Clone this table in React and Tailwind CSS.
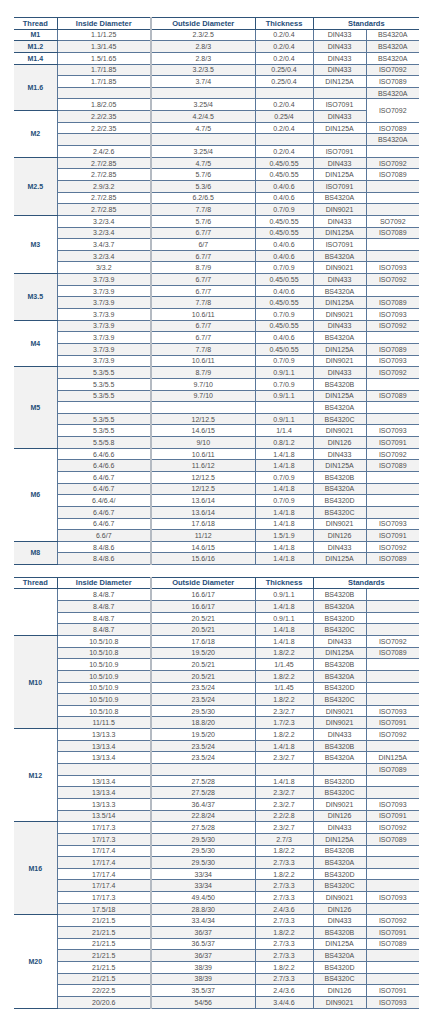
import React from 'react';

// rows: [inside, outside, thickness, std1, std2]; std2 may be { t, span } or null (covered by span above)
const table1 = [
  { thread: 'M1', rows: [['1.1/1.25', '2.3/2.5', '0.2/0.4', 'DIN433', 'BS4320A']] },
  { thread: 'M1.2', rows: [['1.3/1.45', '2.8/3', '0.2/0.4', 'DIN433', 'BS4320A']] },
  { thread: 'M1.4', rows: [['1.5/1.65', '2.8/3', '0.2/0.4', 'DIN433', 'BS4320A']] },
  {
    thread: 'M1.6',
    rows: [
      ['1.7/1.85', '3.2/3.5', '0.25/0.4', 'DIN433', 'ISO7092'],
      ['1.7/1.85', '3.7/4', '0.25/0.4', 'DIN125A', 'ISO7089'],
      ['', '', '', '', 'BS4320A'],
      ['1.8/2.05', '3.25/4', '0.2/0.4', 'ISO7091', { t: 'ISO7092', span: 2 }],
    ],
  },
  {
    thread: 'M2',
    rows: [
      ['2.2/2.35', '4.2/4.5', '0.25/4', 'DIN433', null],
      ['2.2/2.35', '4.7/5', '0.2/0.4', 'DIN125A', 'ISO7089'],
      ['', '', '', '', 'BS4320A'],
      ['2.4/2.6', '3.25/4', '0.2/0.4', 'ISO7091', ''],
    ],
  },
  {
    thread: 'M2.5',
    rows: [
      ['2.7/2.85', '4.7/5', '0.45/0.55', 'DIN433', 'ISO7092'],
      ['2.7/2.85', '5.7/6', '0.45/0.55', 'DIN125A', 'ISO7089'],
      ['2.9/3.2', '5.3/6', '0.4/0.6', 'ISO7091', ''],
      ['2.7/2.85', '6.2/6.5', '0.4/0.6', 'BS4320A', ''],
      ['2.7/2.85', '7.7/8', '0.7/0.9', 'DIN9021', ''],
    ],
  },
  {
    thread: 'M3',
    rows: [
      ['3.2/3.4', '5.7/6', '0.45/0.55', 'DIN433', 'SO7092'],
      ['3.2/3.4', '6.7/7', '0.45/0.55', 'DIN125A', 'ISO7089'],
      ['3.4/3.7', '6/7', '0.4/0.6', 'ISO7091', ''],
      ['3.2/3.4', '6.7/7', '0.4/0.6', 'BS4320A', ''],
      ['3/3.2', '8.7/9', '0.7/0.9', 'DIN9021', 'ISO7093'],
    ],
  },
  {
    thread: 'M3.5',
    rows: [
      ['3.7/3.9', '6.7/7', '0.45/0.55', 'DIN433', 'ISO7092'],
      ['3.7/3.9', '6.7/7', '0.4/0.6', 'BS4320A', ''],
      ['3.7/3.9', '7.7/8', '0.45/0.55', 'DIN125A', 'ISO7089'],
      ['3.7/3.9', '10.6/11', '0.7/0.9', 'DIN9021', 'ISO7093'],
    ],
  },
  {
    thread: 'M4',
    rows: [
      ['3.7/3.9', '6.7/7', '0.45/0.55', 'DIN433', 'ISO7092'],
      ['3.7/3.9', '6.7/7', '0.4/0.6', 'BS4320A', ''],
      ['3.7/3.9', '7.7/8', '0.45/0.55', 'DIN125A', 'ISO7089'],
      ['3.7/3.9', '10.6/11', '0.7/0.9', 'DIN9021', 'ISO7093'],
    ],
  },
  {
    thread: 'M5',
    rows: [
      ['5.3/5.5', '8.7/9', '0.9/1.1', 'DIN433', 'ISO7092'],
      ['5.3/5.5', '9.7/10', '0.7/0.9', 'BS4320B', ''],
      ['5.3/5.5', '9.7/10', '0.9/1.1', 'DIN125A', 'ISO7089'],
      ['', '', '', 'BS4320A', ''],
      ['5.3/5.5', '12/12.5', '0.9/1.1', 'BS4320C', ''],
      ['5.3/5.5', '14.6/15', '1/1.4', 'DIN9021', 'ISO7093'],
      ['5.5/5.8', '9/10', '0.8/1.2', 'DIN126', 'ISO7091'],
    ],
  },
  {
    thread: 'M6',
    rows: [
      ['6.4/6.6', '10.6/11', '1.4/1.8', 'DIN433', 'ISO7092'],
      ['6.4/6.6', '11.6/12', '1.4/1.8', 'DIN125A', 'ISO7089'],
      ['6.4/6.7', '12/12.5', '0.7/0.9', 'BS4320B', ''],
      ['6.4/6.7', '12/12.5', '1.4/1.8', 'BS4320A', ''],
      ['6.4/6.4/', '13.6/14', '0.7/0.9', 'BS4320D', ''],
      ['6.4/6.7', '13.6/14', '1.4/1.8', 'BS4320C', ''],
      ['6.4/6.7', '17.6/18', '1.4/1.8', 'DIN9021', 'ISO7093'],
      ['6.6/7', '11/12', '1.5/1.9', 'DIN126', 'ISO7091'],
    ],
  },
  {
    thread: 'M8',
    rows: [
      ['8.4/8.6', '14.6/15', '1.4/1.8', 'DIN433', 'ISO7092'],
      ['8.4/8.6', '15.6/16', '1.4/1.8', 'DIN125A', 'ISO7089'],
    ],
  },
];

const table2 = [
  {
    thread: '',
    rows: [
      ['8.4/8.7', '16.6/17', '0.9/1.1', 'BS4320B', ''],
      ['8.4/8.7', '16.6/17', '1.4/1.8', 'BS4320A', ''],
      ['8.4/8.7', '20.5/21', '0.9/1.1', 'BS4320D', ''],
      ['8.4/8.7', '20.5/21', '1.4/1.8', 'BS4320C', ''],
    ],
  },
  {
    thread: 'M10',
    rows: [
      ['10.5/10.8', '17.6/18', '1.4/1.8', 'DIN433', 'ISO7092'],
      ['10.5/10.8', '19.5/20', '1.8/2.2', 'DIN125A', 'ISO7089'],
      ['10.5/10.9', '20.5/21', '1/1.45', 'BS4320B', ''],
      ['10.5/10.9', '20.5/21', '1.8/2.2', 'BS4320A', ''],
      ['10.5/10.9', '23.5/24', '1/1.45', 'BS4320D', ''],
      ['10.5/10.9', '23.5/24', '1.8/2.2', 'BS4320C', ''],
      ['10.5/10.8', '29.5/30', '2.3/2.7', 'DIN9021', 'ISO7093'],
      ['11/11.5', '18.8/20', '1.7/2.3', 'DIN9021', 'ISO7091'],
    ],
  },
  {
    thread: 'M12',
    rows: [
      ['13/13.3', '19.5/20', '1.8/2.2', 'DIN433', 'ISO7092'],
      ['13/13.4', '23.5/24', '1.4/1.8', 'BS4320B', ''],
      ['13/13.4', '23.5/24', '2.3/2.7', 'BS4320A', 'DIN125A'],
      ['', '', '', '', 'ISO7089'],
      ['13/13.4', '27.5/28', '1.4/1.8', 'BS4320D', ''],
      ['13/13.4', '27.5/28', '2.3/2.7', 'BS4320C', ''],
      ['13/13.3', '36.4/37', '2.3/2.7', 'DIN9021', 'ISO7093'],
      ['13.5/14', '22.8/24', '2.2/2.8', 'DIN126', 'ISO7091'],
    ],
  },
  {
    thread: 'M16',
    rows: [
      ['17/17.3', '27.5/28', '2.3/2.7', 'DIN433', 'ISO7092'],
      ['17/17.3', '29.5/30', '2.7/3', 'DIN125A', 'ISO7089'],
      ['17/17.4', '29.5/30', '1.8/2.2', 'BS4320B', ''],
      ['17/17.4', '29.5/30', '2.7/3.3', 'BS4320A', ''],
      ['17/17.4', '33/34', '1.8/2.2', 'BS4320D', ''],
      ['17/17.4', '33/34', '2.7/3.3', 'BS4320C', ''],
      ['17/17.3', '49.4/50', '2.7/3.3', 'DIN9021', 'ISO7093'],
      ['17.5/18', '28.8/30', '2.4/3.6', 'DIN126', ''],
    ],
  },
  {
    thread: 'M20',
    rows: [
      ['21/21.5', '33.4/34', '2.7/3.3', 'DIN433', 'ISO7092'],
      ['21/21.5', '36/37', '1.8/2.2', 'BS4320B', 'ISO7091'],
      ['21/21.5', '36.5/37', '2.7/3.3', 'DIN125A', 'ISO7089'],
      ['21/21.5', '36/37', '2.7/3.3', 'BS4320A', ''],
      ['21/21.5', '38/39', '1.8/2.2', 'BS4320D', ''],
      ['21/21.5', '38/39', '2.7/3.3', 'BS4320C', ''],
      ['22/22.5', '35.5/37', '2.4/3.6', 'DIN126', 'ISO7091'],
      ['20/20.6', '54/56', '3.4/4.6', 'DIN9021', 'ISO7093'],
    ],
  },
];

const cell = 'p-0 text-center align-middle border-b border-[#5a7799] text-[#4f4f4f]';

const SpecTable = ({ groups }) => {
  let rowNo = 0;
  return (
    <table className="table-fixed border-collapse w-[405px] ml-[14px] text-[7px] leading-none">
      <colgroup>
        <col className="w-[43px]" />
        <col className="w-[94px]" />
        <col className="w-[104px]" />
        <col className="w-[58px]" />
        <col className="w-[53px]" />
        <col className="w-[53px]" />
      </colgroup>
      <thead>
        <tr className="h-[11.65px] font-bold text-[7.5px] text-[#1f4e79]">
          <th className="p-0 border-t border-b border-[#2f5479]">Thread</th>
          <th className="p-0 border-t border-b border-l border-[#2f5479]">Inside Diameter</th>
          <th className="p-0 border-t border-b border-l-2 border-[#2f5479] border-l-[#b4bac2]">Outside Diameter</th>
          <th className="p-0 border-t border-b border-l border-[#2f5479]">Thickness</th>
          <th colSpan={2} className="p-0 border-t border-b border-l border-[#2f5479]">Standards</th>
        </tr>
      </thead>
      <tbody>
        {groups.map((g, gi) =>
          g.rows.map((r, ri) => {
            rowNo += 1;
            const stripe = rowNo % 2 === 0 ? 'bg-[#f2f2f2]' : 'bg-white';
            const s2 = r[4];
            return (
              <tr key={`${gi}-${ri}`} className={`h-[11.65px] ${stripe}`}>
                {ri === 0 && (
                  <td
                    rowSpan={g.rows.length}
                    className={`p-0 text-center align-middle font-bold text-[#1f4e79] border-b border-[#2f5479] ${gi % 2 === 1 ? 'bg-[#f2f2f2]' : 'bg-white'}`}
                  >
                    {g.thread}
                  </td>
                )}
                <td className={`${cell} border-l`}>{r[0]}</td>
                <td className={`${cell} border-l-2 border-l-[#b4bac2]`}>{r[1]}</td>
                <td className={`${cell} border-l`}>{r[2]}</td>
                <td className={`${cell} border-l`}>{r[3]}</td>
                {s2 !== null && (
                  <td
                    rowSpan={typeof s2 === 'object' ? s2.span : 1}
                    className={`${cell} border-l`}
                  >
                    {typeof s2 === 'object' ? s2.t : s2}
                  </td>
                )}
              </tr>
            );
          })
        )}
      </tbody>
    </table>
  );
}

export default function App() {
  return (
    <div className="w-[438px] min-h-[1024px] bg-white pt-[17px] font-['Liberation_Sans',Arial,sans-serif]">
      <SpecTable groups={table1} />
      <div className="h-[11.7px]" />
      <SpecTable groups={table2} />
    </div>
  );
}
